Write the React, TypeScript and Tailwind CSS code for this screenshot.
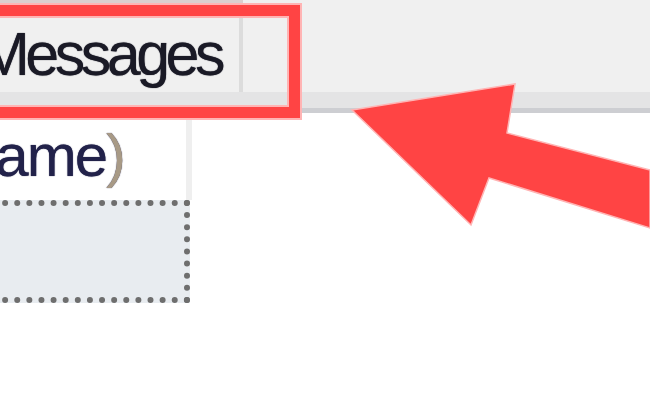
import React from "react"

// Zoomed results pane: "Messages" tab highlighted with a red box and an arrow
export default function App() {
  const font = { fontFamily: '"Liberation Sans", Arial, sans-serif' }

  return (
    <div
      className="relative w-[650px] h-[400px] overflow-hidden bg-white"
      style={font}
    >
      {/* tab strip */}
      <div className="flex flex-col h-[113px]">
        <div className="flex h-[5px] bg-[#f0f0f0]">
          <div className="w-[243px] bg-[#dccfcf]" />
        </div>
        <div className="flex flex-1 bg-[#f0f0f0]">
          <div className="flex justify-end w-[243px] pr-[18px] pt-[19px] border-r-[4px] border-[#dcdcdc] overflow-hidden">
            <span className="whitespace-nowrap text-[61px] leading-[60px] tracking-[-4.5px] text-[#1a1a26] blur-[0.7px] [text-shadow:0_0_1px_#1a1a26]">
              Results Messages
            </span>
          </div>
        </div>
        <div className="h-[16px] bg-[#e4e4e5]" />
        <div className="h-[5px] bg-[#cdced2]" />
      </div>

      {/* grid */}
      <div className="flex flex-col w-[192px]">
        <div className="flex justify-end h-[87px] pr-[62px] pt-[13px] border-r-[6px] border-[#efefef] overflow-hidden">
          <span className="whitespace-nowrap text-[60px] leading-[60px] tracking-[-2px] text-[#22224a] blur-[0.7px] [text-shadow:0_0_1px_#22224a]">
            (Column name<span className="text-[#a89a86]">)</span>
          </span>
        </div>
        <div className="-ml-[10px] h-[103px] bg-[#e8ecf0] border-[6px] border-dotted border-[#6e6e6e] w-[200px]" />
      </div>

      {/* red highlight box */}
      <div className="absolute left-[-30px] top-[5px] w-[330px] h-[113px] border-[11px] border-[#ff4444] shadow-[0_0_0_2px_#ffb4b4,inset_0_0_0_2px_#ffb4b4]" />

      {/* arrow */}
      <svg
        className="absolute left-0 top-0"
        width="650"
        height="400"
        viewBox="0 0 650 400"
      >
        <polygon
          points="352,110 515,84 507,133 650,170 650,228 489,178 471,225"
          fill="#ff4444"
          stroke="#ffb4b4"
          strokeWidth="1.5"
          strokeLinejoin="miter"
        />
      </svg>
    </div>
  )
}
